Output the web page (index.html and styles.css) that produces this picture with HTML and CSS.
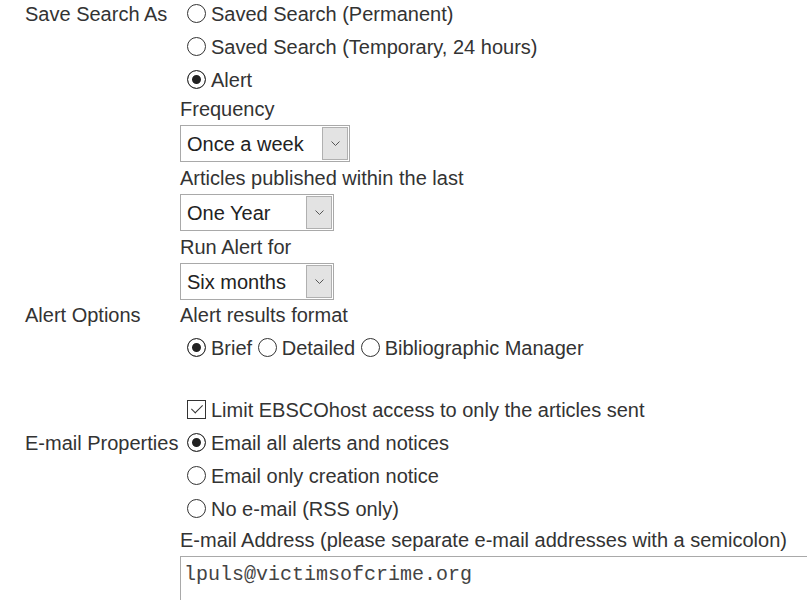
FILE: index.html
```html
<!DOCTYPE html>
<html lang="en">
  <head>
    <meta charset="UTF-8" />
    <meta name="viewport" content="width=device-width, initial-scale=1.0" />
    <title>Save Search As Alert</title>
    <link rel="stylesheet" href="styles.css">
  </head>
  <body>
    <form class="alert-form">
      <div class="row">
        <div class="row-label">Save Search As</div>
        <div class="row-body">
          <div class="opts">
            <label class="opt"><input type="radio" name="saveAs" value="perm" />Saved Search (Permanent)</label>
            <label class="opt"><input type="radio" name="saveAs" value="temp" />Saved Search (Temporary, 24 hours)</label>
            <label class="opt"><input type="radio" name="saveAs" value="alert" checked />Alert</label>
          </div>

          <label class="field-label first" for="frequency">Frequency</label>
          <div class="select-box wide">
            <select id="frequency">
              <option>Once a week</option>
              <option>Once a day</option>
              <option>Once a month</option>
            </select>
            <span class="select-arrow">
              <svg width="9" height="5" viewBox="0 0 9 5"><polyline points="0.5,0.5 4.5,4.5 8.5,0.5" fill="none" stroke="#555" stroke-width="1" /></svg>
            </span>
          </div>

          <label class="field-label" for="published">Articles published within the last</label>
          <div class="select-box">
            <select id="published">
              <option>One Year</option>
              <option>Six Months</option>
              <option>One Month</option>
            </select>
            <span class="select-arrow">
              <svg width="9" height="5" viewBox="0 0 9 5"><polyline points="0.5,0.5 4.5,4.5 8.5,0.5" fill="none" stroke="#555" stroke-width="1" /></svg>
            </span>
          </div>

          <label class="field-label" for="runFor">Run Alert for</label>
          <div class="select-box">
            <select id="runFor">
              <option>Six months</option>
              <option>One year</option>
              <option>Two years</option>
            </select>
            <span class="select-arrow">
              <svg width="9" height="5" viewBox="0 0 9 5"><polyline points="0.5,0.5 4.5,4.5 8.5,0.5" fill="none" stroke="#555" stroke-width="1" /></svg>
            </span>
          </div>
        </div>
      </div>

      <div class="row options-row">
        <div class="row-label">Alert Options</div>
        <div class="row-body opts">
          <div class="field-label first">Alert results format</div>
          <div class="opt">
            <label><input type="radio" name="format" value="brief" checked />Brief</label>
            <label><input type="radio" name="format" value="detailed" />Detailed</label>
            <label><input type="radio" name="format" value="biblio" />Bibliographic Manager</label>
          </div>
          <div class="spacer"></div>
          <label class="opt"><input type="checkbox" name="limit" checked />Limit EBSCOhost access to only the articles sent</label>
        </div>
      </div>

      <div class="row email-row">
        <div class="row-label">E-mail Properties</div>
        <div class="row-body">
          <div class="opts">
            <label class="opt"><input type="radio" name="email" value="all" checked />Email all alerts and notices</label>
            <label class="opt"><input type="radio" name="email" value="creation" />Email only creation notice</label>
            <label class="opt"><input type="radio" name="email" value="none" />No e-mail (RSS only)</label>
          </div>
          <label class="field-label" for="emailTo">E-mail Address (please separate e-mail addresses with a semicolon)</label>
          <textarea id="emailTo" class="email-box" rows="3">lpuls@victimsofcrime.org</textarea>
        </div>
      </div>
    </form>
  </body>
</html>
```

FILE: styles.css
```css
html,
body {
  overflow: hidden;
}
body {
  margin: 0;
  font-family: "Liberation Sans", Arial, sans-serif;
  font-size: 20px;
  color: #333;
  background: #fff;
}
.alert-form {
  padding-left: 25px;
}
.row {
  display: grid;
  grid-template-columns: 155px 1fr;
}
.options-row {
  margin-top: 1px;
}
.email-row {
  margin-top: 4px;
}
.row-label {
  line-height: 29px;
  white-space: nowrap;
}
.row-body {
  display: flex;
  flex-direction: column;
  align-items: flex-start;
}
.opts {
  display: flex;
  flex-direction: column;
  gap: 4px;
}
.opt {
  line-height: 29px;
  min-height: 29px;
  white-space: nowrap;
}
.spacer {
  height: 25px;
}
.field-label {
  display: block;
  line-height: 29px;
  margin-top: 2px;
}
.field-label.first {
  margin-top: 0;
}
input[type="radio"],
input[type="checkbox"] {
  appearance: none;
  -webkit-appearance: none;
  width: 19px;
  height: 19px;
  margin: 0 5px 0 7px;
  border: 1px solid #333;
  background: #fff;
  vertical-align: -2px;
  box-sizing: border-box;
  position: relative;
}
input[type="radio"] {
  border-radius: 50%;
}
input[type="radio"]:checked {
  background: #222;
  box-shadow: inset 0 0 0 4px #fff;
}
.opt label + label input[type="radio"] {
  margin-left: 0;
}
input[type="checkbox"]:checked::after {
  content: "";
  position: absolute;
  left: 6px;
  top: 1px;
  width: 5px;
  height: 10px;
  border: solid #333;
  border-width: 0 1.5px 1.5px 0;
  transform: rotate(45deg);
}
.select-box {
  display: inline-flex;
  width: 154px;
  height: 37px;
  margin-top: 1px;
  border: 1px solid #a9a9a9;
  box-sizing: border-box;
  background: #fff;
}
.select-box.wide {
  width: 170px;
}
.select-box select {
  appearance: none;
  -webkit-appearance: none;
  flex: 1;
  min-width: 0;
  border: none;
  background: transparent;
  font-family: "Liberation Sans", Arial, sans-serif;
  font-size: 20px;
  color: #222;
  padding: 0 0 0 6px;
  outline: none;
}
.select-arrow {
  display: flex;
  align-items: center;
  justify-content: center;
  width: 24px;
  margin: 1px;
  background: #e3e3e3;
  border: 1px solid #b0b0b0;
}
.email-box {
  display: block;
  width: 700px;
  height: 80px;
  margin-top: 1px;
  padding: 6px 3px;
  border: 1px solid #a9a9a9;
  font-family: "Liberation Mono", "Courier New", monospace;
  font-size: 20px;
  color: #444;
  resize: none;
  box-sizing: border-box;
}
```
